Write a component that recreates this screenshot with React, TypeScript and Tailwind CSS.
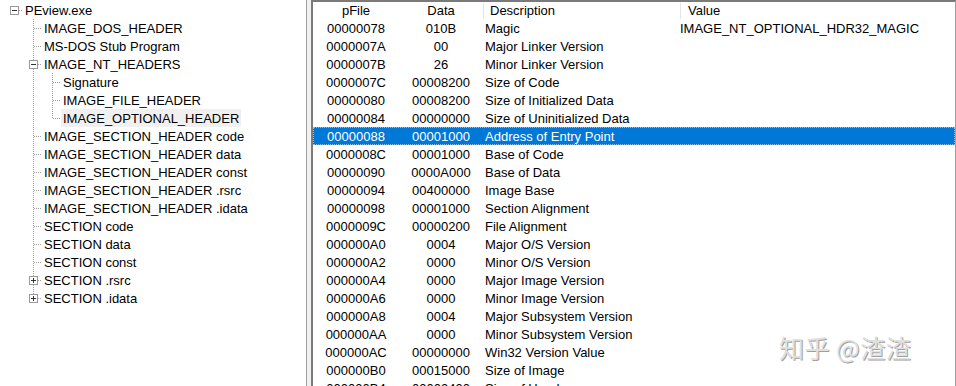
import React from "react";

type Node = { label: string; depth: number; box?: "-" | "+"; last?: boolean; guides: boolean[]; selected?: boolean };

const tree: Node[] = [
  { label: "PEview.exe", depth: 0, box: "-", guides: [], last: true },
  { label: "IMAGE_DOS_HEADER", depth: 1, guides: [false] },
  { label: "MS-DOS Stub Program", depth: 1, guides: [false] },
  { label: "IMAGE_NT_HEADERS", depth: 1, box: "-", guides: [false] },
  { label: "Signature", depth: 2, guides: [false, true] },
  { label: "IMAGE_FILE_HEADER", depth: 2, guides: [false, true] },
  { label: "IMAGE_OPTIONAL_HEADER", depth: 2, guides: [false, true], last: true, selected: true },
  { label: "IMAGE_SECTION_HEADER code", depth: 1, guides: [false] },
  { label: "IMAGE_SECTION_HEADER data", depth: 1, guides: [false] },
  { label: "IMAGE_SECTION_HEADER const", depth: 1, guides: [false] },
  { label: "IMAGE_SECTION_HEADER .rsrc", depth: 1, guides: [false] },
  { label: "IMAGE_SECTION_HEADER .idata", depth: 1, guides: [false] },
  { label: "SECTION code", depth: 1, guides: [false] },
  { label: "SECTION data", depth: 1, guides: [false] },
  { label: "SECTION const", depth: 1, guides: [false] },
  { label: "SECTION .rsrc", depth: 1, box: "+", guides: [false] },
  { label: "SECTION .idata", depth: 1, box: "+", guides: [false], last: true },
];

const rows: [string, string, string, string?][] = [
  ["00000078", "010B", "Magic", "IMAGE_NT_OPTIONAL_HDR32_MAGIC"],
  ["0000007A", "00", "Major Linker Version"],
  ["0000007B", "26", "Minor Linker Version"],
  ["0000007C", "00008200", "Size of Code"],
  ["00000080", "00008200", "Size of Initialized Data"],
  ["00000084", "00000000", "Size of Uninitialized Data"],
  ["00000088", "00001000", "Address of Entry Point"],
  ["0000008C", "00001000", "Base of Code"],
  ["00000090", "0000A000", "Base of Data"],
  ["00000094", "00400000", "Image Base"],
  ["00000098", "00001000", "Section Alignment"],
  ["0000009C", "00000200", "File Alignment"],
  ["000000A0", "0004", "Major O/S Version"],
  ["000000A2", "0000", "Minor O/S Version"],
  ["000000A4", "0000", "Major Image Version"],
  ["000000A6", "0000", "Minor Image Version"],
  ["000000A8", "0004", "Major Subsystem Version"],
  ["000000AA", "0000", "Minor Subsystem Version"],
  ["000000AC", "00000000", "Win32 Version Value"],
  ["000000B0", "00015000", "Size of Image"],
  ["000000B4", "00000400", "Size of Headers"],
];

const LINE = "#a0a0a0";

// one 19x18 indent cell of the tree, dotted guide lines + expander box
function Cell({ kind, box, last, root }: { kind: "pass" | "none" | "conn"; box?: "-" | "+"; last?: boolean; root?: boolean }) {
  return (
    <svg width="19" height="18" className="shrink-0" shapeRendering="crispEdges">
      {kind === "pass" && <line x1="11.5" y1="0" x2="11.5" y2="18" stroke={LINE} strokeDasharray="1 1" />}
      {kind === "conn" && (
        <>
          {!root && <line x1="11.5" y1="0" x2="11.5" y2={last ? 10 : 18} stroke={LINE} strokeDasharray="1 1" />}
          <line x1="12" y1="9.5" x2="19" y2="9.5" stroke={LINE} strokeDasharray="1 1" />
          {box && (
            <>
              <rect x="7.5" y="5.5" width="8" height="8" fill="#fff" stroke="#9a9a9a" />
              <line x1="9" y1="9.5" x2="14" y2="9.5" stroke="#333" />
              {box === "+" && <line x1="11.5" y1="7" x2="11.5" y2="12" stroke="#333" />}
            </>
          )}
        </>
      )}
    </svg>
  );
}

function TreeRow({ n }: { n: Node }) {
  const cells = [];
  for (let i = 0; i < n.depth; i++) {
    cells.push(<Cell key={i} kind={n.guides[i] ? "pass" : "none"} />);
  }
  cells.push(<Cell key="c" kind="conn" box={n.box} last={n.last} root={n.depth === 0} />);
  return (
    <div className="flex h-[18px] items-center">
      {cells}
      <span className={"ml-[1px] h-[18px] px-[2px] pt-[1px] leading-[17px] " + (n.selected ? "bg-[#f0f0f0]" : "")}>{n.label}</span>
    </div>
  );
}

export default function App() {
  return (
    <div className="relative flex h-[386px] w-[956px] overflow-hidden bg-white text-[13px] text-black [font-family:'Liberation_Sans',Arial,sans-serif]">
      <div className="w-[307px] shrink-0 border-r border-[#a0a0a0] pl-[3px] pt-[1px]">
        {tree.map((n, i) => (
          <TreeRow key={i} n={n} />
        ))}
      </div>
      <div className="w-[4px] shrink-0 bg-[#f0f0f0]" />
      <div className="flex-1 border-l-2 border-t-2 border-r border-l-[#7a7a7a] border-t-[#7a7a7a] border-r-[#a0a0a0]">
        <div className="flex h-[17px] pt-[1px] leading-[16px]">
          <div className="w-[86px] text-center">pFile</div>
          <div className="w-[84px] text-center">Data</div>
          <div className="w-[197px] border-l border-[#e5e5e5] pl-[6px]">Description</div>
          <div className="flex-1 border-l border-[#e5e5e5] pl-[7px]">Value</div>
        </div>
        {rows.map((r, i) => {
          const sel = i === 6;
          return (
            <div
              key={i}
              className={
                "flex h-[18px] pt-[1px] leading-[17px] " +
                (sel ? "bg-[#0078d7] text-white outline-1 outline-dotted -outline-offset-1 outline-[#8fbde8]" : "")
              }
            >
              <div className="w-[86px] text-center">{r[0]}</div>
              <div className="w-[84px] text-center">{r[1]}</div>
              <div className="w-[197px] pl-[2px]">{r[2]}</div>
              <div className="flex-1">{r[3] ?? ""}</div>
            </div>
          );
        })}
      </div>
      <div className="absolute left-[779px] top-[329px] text-[25px] tracking-[0.5px] text-[#e0e0e0] [font-family:'Noto_Sans_CJK_SC',sans-serif] [text-shadow:1px_1px_0_#a0a0a0]">
        知乎 @渣渣
      </div>
    </div>
  );
}
